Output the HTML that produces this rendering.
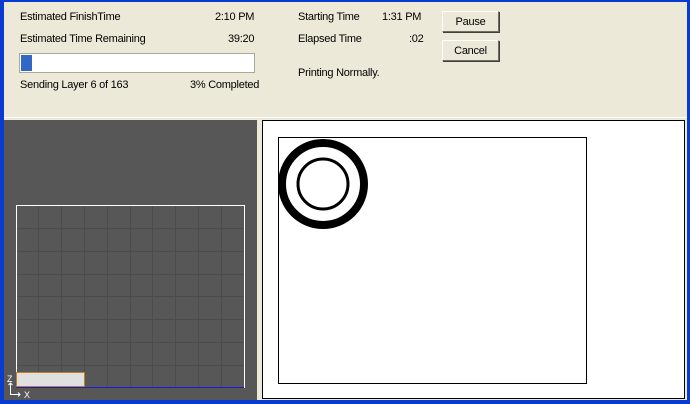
<!DOCTYPE html>
<html><head><style>
body{margin:0;width:690px;height:404px;background:#0a3bd0;position:relative;overflow:hidden;font-family:"Liberation Sans",sans-serif;font-size:11px;letter-spacing:-0.25px;color:#000}
.t{position:absolute;white-space:nowrap}
.btn{position:absolute;width:57px;height:21px;background:#ECE9D8;border:1px solid;border-color:#fff #716f64 #716f64 #fff;box-shadow:1px 1px 0 #404040;text-align:center;line-height:21px;box-sizing:border-box}
</style></head><body>
<div style="position:absolute;left:4px;top:2px;width:683px;height:398px;background:#ECE9D8"></div>
<div style="position:absolute;left:4px;top:117px;width:683px;height:1px;background:#fff"></div>
<div class="t" style="left:20px;top:11px">Estimated FinishTime</div>
<div class="t" style="left:215px;top:11px">2:10 PM</div>
<div class="t" style="left:20px;top:33px">Estimated Time Remaining</div>
<div class="t" style="left:228px;top:33px">39:20</div>
<div style="position:absolute;left:19px;top:53px;width:236px;height:20px;background:#fff;border:1px solid #aca899;box-sizing:border-box"></div>
<div style="position:absolute;left:21px;top:55px;width:11px;height:16px;background:#3168c6"></div>
<div class="t" style="left:20px;top:79px">Sending Layer 6 of 163</div>
<div class="t" style="left:190px;top:79px">3% Completed</div>
<div class="t" style="left:298px;top:11px">Starting Time</div>
<div class="t" style="left:382px;top:11px">1:31 PM</div>
<div class="t" style="left:298px;top:33px">Elapsed Time</div>
<div class="t" style="left:409px;top:33px">:02</div>
<div class="t" style="left:298px;top:67px">Printing Normally.</div>
<div class="btn" style="left:442px;top:11px">Pause</div>
<div class="btn" style="left:442px;top:40px">Cancel</div>
<div style="position:absolute;left:4px;top:120px;width:253px;height:280px;background:#575757"></div>
<svg style="position:absolute;left:0;top:0" width="690" height="404">
<g stroke="#4c4c4c" stroke-width="1">
<path d="M38.5 206V387M61.5 206V387M84.5 206V387M107.5 206V387M130.5 206V387M152.5 206V387M175.5 206V387M198.5 206V387M221.5 206V387M16 228.5H244M16 251.5H244M16 274.5H244M16 296.5H244M16 319.5H244M16 342.5H244M16 365.5H244"/>
</g>
<rect x="16.5" y="205.5" width="228" height="182" fill="none" stroke="#fff"/>
<line x1="16" y1="387.5" x2="244" y2="387.5" stroke="#1a1ad0"/>
<rect x="16.5" y="372.5" width="68" height="14" fill="#e0e0e0" stroke="#c08020"/>
<path d="M10.5 383V394.5H20M8.5 385L10.5 383L12.5 385M18 392.5L20 394.5L18 396.5" stroke="#fff" fill="none"/>
<text x="7" y="382" fill="#fff" font-size="9" letter-spacing="0">Z</text>
<text x="24" y="398" fill="#fff" font-size="9" letter-spacing="0">X</text>
<rect x="262.5" y="120.5" width="422" height="278" fill="#fff" stroke="#000"/>
<rect x="278.5" y="137.5" width="308" height="246" fill="none" stroke="#000"/>
<circle cx="323" cy="184" r="41" fill="none" stroke="#000" stroke-width="8"/>
<circle cx="323" cy="184" r="25" fill="none" stroke="#000" stroke-width="3"/>
</svg>
</body></html>
